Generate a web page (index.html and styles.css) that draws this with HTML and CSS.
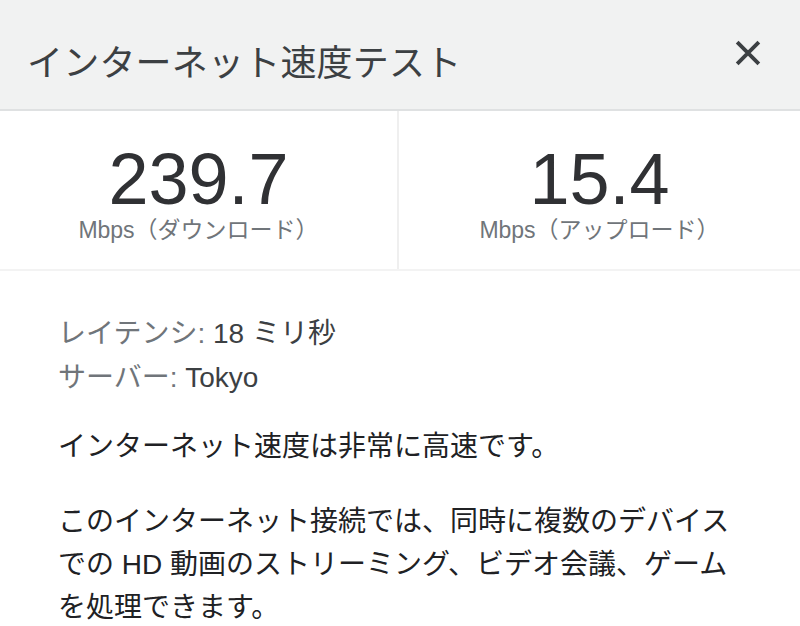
FILE: index.html
```html
<!DOCTYPE html>
<html lang="ja">
<head>
<meta charset="utf-8">
<title>インターネット速度テスト</title>
<link rel="stylesheet" href="styles.css">
</head>
<body>
<div class="panel">
  <header class="head">
    <h1 class="title">インターネット速度テスト</h1>
    <button class="close" aria-label="閉じる">
      <svg viewBox="0 0 24 24" width="40" height="40"><path d="M5.5 5.5 L18.5 18.5 M18.5 5.5 L5.5 18.5" stroke="#3c4043" stroke-width="2.3" fill="none"/></svg>
    </button>
  </header>
  <section class="stats">
    <div class="stat">
      <div class="num">239.7</div>
      <div class="unit">Mbps（ダウンロード）</div>
    </div>
    <div class="stat divided">
      <div class="num">15.4</div>
      <div class="unit">Mbps（アップロード）</div>
    </div>
  </section>
  <section class="info">
    <div class="meta">
      <div class="row"><span class="key">レイテンシ:</span> <span class="val">18 ミリ秒</span></div>
      <div class="row"><span class="key">サーバー:</span> <span class="val">Tokyo</span></div>
    </div>
    <p class="para">インターネット速度は非常に高速です。</p>
    <p class="para">このインターネット接続では、同時に複数のデバイスでの HD 動画のストリーミング、ビデオ会議、ゲームを処理できます。</p>
  </section>
</div>
</body>
</html>
```
FILE: styles.css
```css
html, body {
  margin: 0;
  padding: 0;
  background: #fff;
}
body {
  font-family: "Liberation Sans", "Noto Sans CJK JP", sans-serif;
  color: #202124;
}
.panel {
  width: 800px;
  height: 626px;
  overflow: hidden;
}
.head {
  height: 111px;
  background: #f1f2f2;
  border-bottom: 2px solid #dfe1e2;
  display: flex;
  align-items: center;
  justify-content: space-between;
  padding: 0 32px 0 27px;
  box-sizing: border-box;
}
.title {
  margin: 0;
  font-weight: normal;
  font-size: 36px;
  color: #3c4043;
  letter-spacing: 0.2px;
  padding-top: 11px;
}
.close {
  border: 0;
  background: none;
  padding: 0;
  width: 40px;
  height: 40px;
  display: flex;
  align-items: center;
  justify-content: center;
  margin-top: -4px;
}
.stats {
  display: grid;
  grid-template-columns: 397px 1fr;
  height: 158px;
  border-bottom: 2px solid #f3f3f3;
}
.stat {
  display: flex;
  flex-direction: column;
  align-items: center;
  padding-top: 28px;
}
.divided {
  border-left: 2px solid #efefef;
}
.num {
  font-size: 72px;
  line-height: 80px;
  color: #303134;
}
.unit {
  font-size: 23px;
  line-height: 26px;
  color: #70757a;
  margin-top: -2px;
}
.info {
  padding: 41px 0 0 58px;
  font-size: 28px;
}
.row {
  height: 44px;
  line-height: 44px;
}
.key {
  color: #70757a;
}
.val {
  color: #3c4043;
}
.para {
  margin: 25px 0 0;
  width: 690px;
  line-height: 43px;
  color: #202124;
}
.para + .para {
  margin-top: 32px;
}
```
